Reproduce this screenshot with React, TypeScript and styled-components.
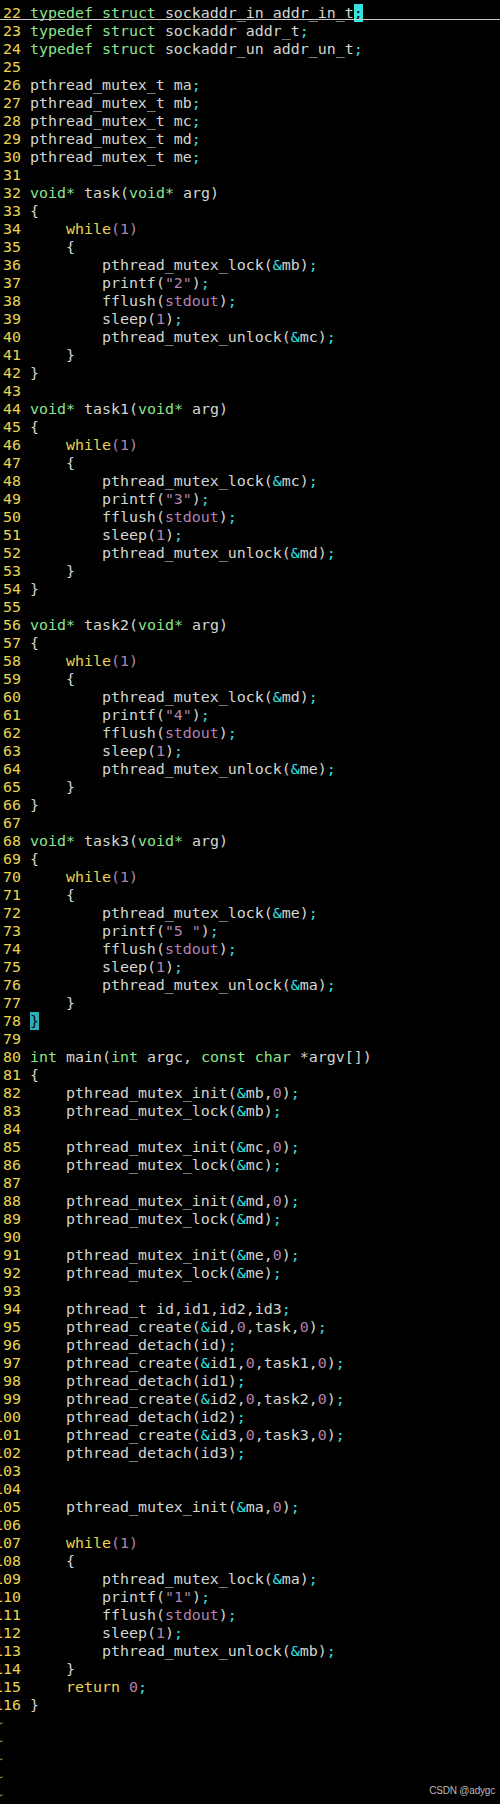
import React from "react";
import styled, { createGlobalStyle, css } from "styled-components";

const C = {
  bg: "#000000",
  text: "#d3d7cf",
  lineNr: "#ead64f",
  type: "#8ee48e",
  stmt: "#ead64f",
  constant: "#b383b0",
  special: "#34e2e2",
  cursor: "#34e2e2",
  match: "#2cb0b6",
  nonText: "#8a8650",
};

const GlobalStyle = createGlobalStyle`
  html, body {
    margin: 0;
    padding: 0;
    background: ${C.bg};
  }
  #root {
    background: ${C.bg};
  }
`;

const Screen = styled.div`
  position: relative;
  width: 500px;
  height: 1804px;
  overflow: hidden;
  background: ${C.bg};
`;

const Editor = styled.div`
  display: flex;
  flex-direction: column;
  padding-top: 4px;
  margin-left: -6px;
  font-family: "DejaVu Sans Mono", "Liberation Mono", monospace;
  font-size: 14.95px;
  line-height: 18px;
  color: ${C.text};
`;

const Row = styled.div<{ $cursorLine?: boolean }>`
  position: relative;
  display: flex;
  height: 18px;
  white-space: pre;
  ${(p) =>
    p.$cursorLine &&
    css`
      &::after {
        content: "";
        position: absolute;
        left: 0;
        right: -20px;
        top: 15px;
        height: 1px;
        background: #c8c8c8;
      }
    `}
`;

const LineNo = styled.span`
  flex: 0 0 3ch;
  text-align: right;
  margin-right: 1ch;
  color: ${C.lineNr};
`;

const Tilde = styled.span`
  color: ${C.nonText};
`;

const Code = styled.span`
  white-space: pre;
`;

type Kind = "text" | "type" | "stmt" | "constant" | "special" | "cursor" | "match";

const Tok = styled.span<{ $kind: Kind }>`
  color: ${(p) =>
    p.$kind === "type"
      ? C.type
      : p.$kind === "stmt"
      ? C.stmt
      : p.$kind === "constant"
      ? C.constant
      : p.$kind === "special"
      ? C.special
      : p.$kind === "cursor"
      ? "#000000"
      : p.$kind === "match"
      ? "#0a0a0a"
      : C.text};
  ${(p) =>
    p.$kind === "cursor" &&
    css`
      background: ${C.cursor};
    `}
  ${(p) =>
    p.$kind === "match" &&
    css`
      background: ${C.match};
    `}
`;

const Watermark = styled.div`
  position: absolute;
  right: 5px;
  bottom: 8px;
  font-family: "Liberation Sans", Arial, sans-serif;
  font-size: 10px;
  letter-spacing: -0.2px;
  color: #b8b8b8;
`;

const TYPES = new Set(["typedef", "struct", "void", "int", "const", "char"]);
const STMTS = new Set(["while", "return"]);
const CONSTS = new Set(["stdout"]);

type Token = { text: string; kind: Kind };

function tokenize(line: string): Token[] {
  const re = /("[^"]*")|([A-Za-z_]\w*)|(\d+)|(\s+)|(.)/g;
  const out: Token[] = [];
  let m: RegExpExecArray | null;
  let prevWord = "";
  let inWhileParen = false;
  while ((m = re.exec(line))) {
    const t = m[0];
    if (m[1]) {
      out.push({ text: t, kind: "constant" });
      prevWord = "";
    } else if (m[2]) {
      let kind: Kind = "text";
      if (TYPES.has(t)) kind = "type";
      else if (STMTS.has(t)) kind = "stmt";
      else if (CONSTS.has(t)) kind = "constant";
      out.push({ text: t, kind });
      prevWord = t;
    } else if (m[3]) {
      out.push({ text: t, kind: "constant" });
      prevWord = "";
    } else if (m[4]) {
      out.push({ text: t, kind: "text" });
    } else {
      let kind: Kind = "text";
      if (t === ";" || t === "&") kind = "special";
      else if (t === "*" && prevWord === "void") kind = "type";
      else if (t === "(" && prevWord === "while") {
        kind = "constant";
        inWhileParen = true;
      } else if (t === ")" && inWhileParen) {
        kind = "constant";
        inWhileParen = false;
      }
      out.push({ text: t, kind });
      prevWord = "";
    }
  }
  return out;
}

type Line = { n: number; code: string; cursorLine?: boolean; cursorAt?: number; matchAt?: number };

const taskBlock = (name: string, lock: string, msg: string, unlock: string): string[] => [
  `void* ${name}(void* arg)`,
  `{`,
  `    while(1)`,
  `    {`,
  `        pthread_mutex_lock(&${lock});`,
  `        printf("${msg}");`,
  `        fflush(stdout);`,
  `        sleep(1);`,
  `        pthread_mutex_unlock(&${unlock});`,
  `    }`,
  `}`,
];

const source: string[] = [
  "typedef struct sockaddr_in addr_in_t;",
  "typedef struct sockaddr addr_t;",
  "typedef struct sockaddr_un addr_un_t;",
  "",
  "pthread_mutex_t ma;",
  "pthread_mutex_t mb;",
  "pthread_mutex_t mc;",
  "pthread_mutex_t md;",
  "pthread_mutex_t me;",
  "",
  ...taskBlock("task", "mb", "2", "mc"),
  "",
  ...taskBlock("task1", "mc", "3", "md"),
  "",
  ...taskBlock("task2", "md", "4", "me"),
  "",
  ...taskBlock("task3", "me", "5 ", "ma"),
  "",
  "int main(int argc, const char *argv[])",
  "{",
  "    pthread_mutex_init(&mb,0);",
  "    pthread_mutex_lock(&mb);",
  "",
  "    pthread_mutex_init(&mc,0);",
  "    pthread_mutex_lock(&mc);",
  "",
  "    pthread_mutex_init(&md,0);",
  "    pthread_mutex_lock(&md);",
  "",
  "    pthread_mutex_init(&me,0);",
  "    pthread_mutex_lock(&me);",
  "",
  "    pthread_t id,id1,id2,id3;",
  "    pthread_create(&id,0,task,0);",
  "    pthread_detach(id);",
  "    pthread_create(&id1,0,task1,0);",
  "    pthread_detach(id1);",
  "    pthread_create(&id2,0,task2,0);",
  "    pthread_detach(id2);",
  "    pthread_create(&id3,0,task3,0);",
  "    pthread_detach(id3);",
  "",
  "",
  "    pthread_mutex_init(&ma,0);",
  "",
  "    while(1)",
  "    {",
  "        pthread_mutex_lock(&ma);",
  "        printf(\"1\");",
  "        fflush(stdout);",
  "        sleep(1);",
  "        pthread_mutex_unlock(&mb);",
  "    }",
  "    return 0;",
  "}",
];

const lines: Line[] = source.map((code, i) => {
  const n = 22 + i;
  const l: Line = { n, code };
  if (n === 22) {
    l.cursorLine = true;
    l.cursorAt = code.length - 1;
  }
  if (n === 78) l.matchAt = 0;
  return l;
});

function CodeLine({ line }: { line: Line }) {
  const toks = tokenize(line.code);
  let pos = 0;
  return (
    <Code>
      {toks.map((t, i) => {
        const start = pos;
        pos += t.text.length;
        let kind = t.kind;
        if (line.cursorAt === start && t.text.length === 1) kind = "cursor";
        if (line.matchAt === start && t.text.length === 1) kind = "match";
        return (
          <Tok key={i} $kind={kind}>
            {t.text}
          </Tok>
        );
      })}
    </Code>
  );
}

export default function App() {
  return (
    <Screen>
      <GlobalStyle />
      <Editor>
        {lines.map((l) => (
          <Row key={l.n} $cursorLine={l.cursorLine}>
            <LineNo>{String(l.n)}</LineNo>
            <CodeLine line={l} />
          </Row>
        ))}
        {Array.from({ length: 6 }).map((_, i) => (
          <Row key={`t${i}`}>
            <Tilde>~</Tilde>
          </Row>
        ))}
      </Editor>
      <Watermark>CSDN @adygc</Watermark>
    </Screen>
  );
}
